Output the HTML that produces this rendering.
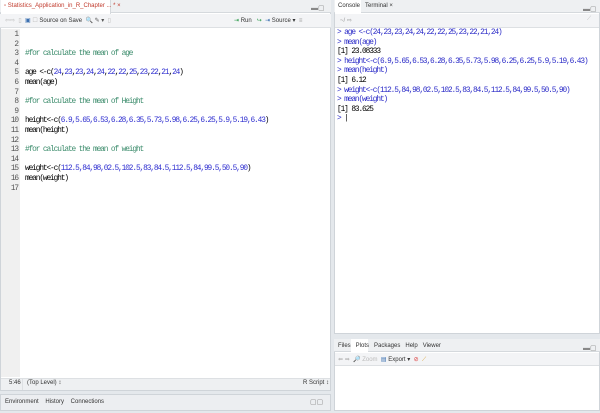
<!DOCTYPE html><html><head><style>
*{margin:0;padding:0;box-sizing:border-box}
body{width:600px;height:413px;background:#e4e8ec;position:relative;overflow:hidden;font-family:"Liberation Sans",sans-serif;font-size:6px;color:#333}
.abs{position:absolute}
.code{font-family:"Liberation Mono",monospace;font-size:7.8px;letter-spacing:-1.1px;line-height:9.6px;white-space:pre}
.c{color:#3c8c6c}.n{color:#3030d0}.b{color:#2c2cc8}
.tab{position:absolute;font-size:6px;top:3px}
</style></head><body>
<div class="abs" style="left:0;top:0;width:331px;height:391px;background:#fff;border:1px solid #cfd4d9"></div>
<div class="abs" style="left:0;top:0;width:331px;height:13px;background:#eef0f2;border-bottom:1px solid #d5d9dd"></div>
<div class="abs" style="left:1px;top:0;width:110px;height:14px;background:#fff;border-right:1px solid #d5d9dd"></div>
<div class="tab" style="left:4px;color:#c0392b">▫ Statistics_Application_in_R_Chapter ... * ×</div>
<div class="abs" style="left:311px;top:4px;color:#888;font-size:7px">▬▢</div>
<div class="abs" style="left:0;top:14px;width:331px;height:14px;background:#f3f4f6;border-bottom:1px solid #dde0e3"></div>
<div class="abs" style="left:5px;top:17px;color:#bbb;font-size:6px">⇦⇨ &nbsp;▯ &nbsp;<span style="color:#3a6fb0">▣</span> ☐ <span style="color:#333">Source on Save</span> &nbsp;<span style="color:#555">🔍 ✎ ▾</span> &nbsp;▯</div>
<div class="abs" style="left:234px;top:17px;font-size:6px"><span style="color:#2a9a4a">⇥</span> Run &nbsp; <span style="color:#2a9a4a">↪</span> &nbsp;<span style="color:#3a6fb0">⇥</span> Source ▾ &nbsp;<span style="color:#999">≡</span></div>
<div class="abs" style="left:1px;top:29px;width:19px;height:348px;background:#f0f0f0"></div>
<div class="abs code" style="left:2px;top:31px;width:16px;text-align:right;color:#555">1
2
3
4
5
6
7
8
9
10
11
12
13
14
15
16
17</div>
<div class="abs code" style="left:25px;top:31px;color:#000">

<span class="c">#for calculate the mean of age</span>

age &lt;-c(<span class="n">24</span>,<span class="n">23</span>,<span class="n">23</span>,<span class="n">24</span>,<span class="n">24</span>,<span class="n">22</span>,<span class="n">22</span>,<span class="n">25</span>,<span class="n">23</span>,<span class="n">22</span>,<span class="n">21</span>,<span class="n">24</span>)
mean(age)

<span class="c">#for calculate the mean of Height</span>

height&lt;-c(<span class="n">6.9,5.65,6.53,6.28,6.35,5.73,5.98,6.25,6.25,5.9,5.19,6.43</span>)
mean(height)

<span class="c">#for calculate the mean of weight</span>

weight&lt;-c(<span class="n">112.5,84,98,02.5,102.5,83,84.5,112.5,84,99.5,50.5,90</span>)
mean(weight)</div>
<div class="abs" style="left:1px;top:378px;width:329px;height:12px;background:#eef0f2;border-top:1px solid #dde0e3"></div>
<div class="abs" style="left:9px;top:380px;font-size:6px">5:46</div>
<div class="abs" style="left:22px;top:378px;width:1px;height:12px;background:#dde0e3"></div>
<div class="abs" style="left:27px;top:380px;font-size:6px">(Top Level) ↕</div>
<div class="abs" style="left:303px;top:380px;font-size:6px">R Script ↕</div>
<div class="abs" style="left:0;top:394px;width:331px;height:17px;background:#eceef1;border:1px solid #cfd4d9"></div>
<div class="abs" style="left:5px;top:399px;font-size:6px">Environment &nbsp;&nbsp; History &nbsp;&nbsp; Connections</div>
<div class="abs" style="left:310px;top:398px;color:#888;font-size:7px">▢▢</div>
<div class="abs" style="left:334px;top:0;width:266px;height:334px;background:#fff;border:1px solid #cfd4d9"></div>
<div class="abs" style="left:334px;top:0;width:266px;height:13px;background:#eef0f2;border-bottom:1px solid #d5d9dd"></div>
<div class="abs" style="left:335px;top:0;width:26px;height:14px;background:#fff"></div>
<div class="tab" style="left:338px">Console &nbsp;&nbsp;Terminal ×</div>
<div class="abs" style="left:583px;top:5px;color:#888;font-size:7px">▬▢</div>
<div class="abs" style="left:335px;top:14px;width:264px;height:14px;background:#f3f4f6;border-bottom:1px solid #dde0e3"></div>
<div class="abs" style="left:340px;top:17px;color:#999">~/ ⇨</div>
<div class="abs" style="left:587px;top:16px;color:#bbb">⟋</div>
<div class="abs code" style="left:337px;top:29px;color:#000"><span class="b">&gt; age &lt;-c(24,23,23,24,24,22,22,25,23,22,21,24)
&gt; mean(age)</span>
[1] 23.08333
<span class="b">&gt; height&lt;-c(6.9,5.65,6.53,6.28,6.35,5.73,5.98,6.25,6.25,5.9,5.19,6.43)
&gt; mean(height)</span>
[1] 6.12
<span class="b">&gt; weight&lt;-c(112.5,84,98,02.5,102.5,83,84.5,112.5,84,99.5,50.5,90)
&gt; mean(weight)</span>
[1] 83.625
<span class="b">&gt;</span> |</div>
<div class="abs" style="left:334px;top:339px;width:266px;height:72px;background:#fff;border:1px solid #cfd4d9"></div>
<div class="abs" style="left:334px;top:339px;width:266px;height:13px;background:#eef0f2;border-bottom:1px solid #d5d9dd"></div>
<div class="abs" style="left:351px;top:339px;width:17px;height:14px;background:#fff"></div>
<div class="tab" style="left:338px;top:343px">Files &nbsp;&nbsp;Plots &nbsp;&nbsp;Packages &nbsp;&nbsp;Help &nbsp;&nbsp;Viewer</div>
<div class="abs" style="left:583px;top:344px;color:#888;font-size:7px">▬▢</div>
<div class="abs" style="left:335px;top:353px;width:264px;height:13px;background:#f3f4f6;border-bottom:1px solid #dde0e3"></div>
<div class="abs" style="left:338px;top:356px;color:#bbb">⬅ ➡ &nbsp;<span>🔎 Zoom</span> &nbsp;<span style="color:#333"><span style="color:#3a6fb0">▤</span> Export ▾</span> &nbsp;<span style="color:#d44">⊘</span> &nbsp;<span style="color:#d9a030">⟋</span></div>
</body></html>
